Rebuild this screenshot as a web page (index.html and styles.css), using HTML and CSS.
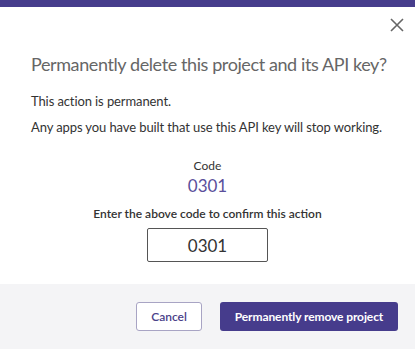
FILE: index.html
```html
<!DOCTYPE html>
<html>
<head>
<meta charset="utf-8">
<link rel="stylesheet" href="styles.css">
</head>
<body>
<div class="modal">
  <div class="topbar"></div>
  <div class="header">
    <button class="close" aria-label="Close">
      <svg width="14" height="14" viewBox="0 0 14 14"><path d="M1 1L13 13M13 1L1 13" stroke="#666" stroke-width="1.6" fill="none"/></svg>
    </button>
  </div>
  <div class="body">
    <h1 class="title">Permanently delete this project and its API key?</h1>
    <p class="text">This action is permanent.</p>
    <p class="text">Any apps you have built that use this API key will stop working.</p>
    <div class="code-block">
      <div class="code-label">Code</div>
      <div class="code-value">0301</div>
      <div class="confirm-label">Enter the above code to confirm this action</div>
      <input class="code-input" type="text" value="0301">
    </div>
  </div>
  <div class="footer">
    <button class="btn btn-secondary">Cancel</button>
    <button class="btn btn-primary">Permanently remove project</button>
  </div>
</div>
</body>
</html>
```
FILE: styles.css
```css
html, body {
  margin: 0;
  padding: 0;
  background: #fff;
}
body {
  font-family: Lato, "Noto Sans", sans-serif;
  width: 415px;
  height: 349px;
  overflow: hidden;
}
.modal {
  display: flex;
  flex-direction: column;
  height: 349px;
}
.topbar {
  height: 7px;
  background: #463d8c;
}
.header {
  display: flex;
  justify-content: flex-end;
  padding: 11px 11px 0 0;
  height: 25px;
}
.close {
  border: 0;
  background: none;
  padding: 0;
  width: 14px;
  height: 14px;
  display: flex;
}
.body {
  padding: 0 31px;
  flex: 1;
}
.title {
  margin: 8px 0 0;
  font-size: 18px;
  font-weight: 400;
  color: #666;
  line-height: 26px;
  letter-spacing: -0.4px;
  white-space: nowrap;
}
.text {
  margin: 0;
  font-size: 13px;
  color: #333;
  line-height: 18px;
  letter-spacing: -0.1px;
  white-space: nowrap;
}
.title + .text { margin-top: 15px; }
.text + .text { margin-top: 8px; }
.code-block {
  display: flex;
  flex-direction: column;
  align-items: center;
  margin-top: 22px;
}
.code-label {
  font-size: 12px;
  color: #333;
  line-height: 16px;
}
.code-value {
  font-size: 17px;
  color: #5a4f9b;
  line-height: 22px;
  margin-top: 1px;
}
.confirm-label {
  font-size: 12px;
  font-weight: 600;
  color: #333;
  line-height: 16px;
  margin-top: 9px;
}
.code-input {
  margin-top: 6px;
  box-sizing: border-box;
  width: 121px;
  height: 34px;
  border: 1px solid #555;
  border-radius: 2px;
  text-align: center;
  font-family: inherit;
  font-size: 17px;
  color: #333;
  padding: 0;
}
.footer {
  background: #f4f4f6;
  height: 65px;
  display: flex;
  justify-content: flex-end;
  align-items: flex-start;
  padding: 18px 17px 0 0;
  box-sizing: border-box;
  gap: 18px;
}
.btn {
  height: 29px;
  border-radius: 3px;
  font-family: inherit;
  font-size: 12px;
  font-weight: 700;
  padding: 0;
  box-sizing: border-box;
}
.btn-secondary {
  width: 66px;
  background: #fff;
  border: 1px solid #a8a4c4;
  color: #4a4189;
  font-weight: 600;
}
.btn-primary {
  width: 178px;
  background: #463c8c;
  border: 0;
  color: #fff;
  letter-spacing: -0.1px;
}
```
